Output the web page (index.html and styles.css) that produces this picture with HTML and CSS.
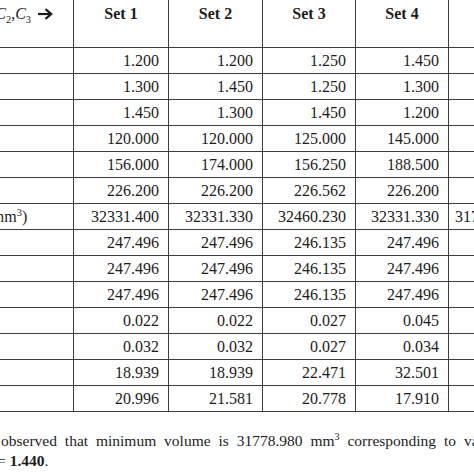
FILE: index.html
```html
<!DOCTYPE html>
<html>
<head>
<meta charset="utf-8">
<link rel="stylesheet" href="styles.css">
</head>
<body>
<div class="page">
  <table class="results">
    <colgroup>
      <col class="c-label"><col class="c1"><col class="c2"><col class="c3"><col class="c4"><col class="c5">
    </colgroup>
    <thead>
      <tr>
        <th class="lab-head"><i>C</i><sub>1</sub>, <i>C</i><sub>2</sub>,<i>C</i><sub>3</sub> <svg class="arrow" width="16" height="12" viewBox="0 0 16 12"><path d="M1 6 H14" stroke="#1c1c1c" stroke-width="2.2" fill="none"/><path d="M8.5 1.2 L14.2 6 L8.5 10.8" stroke="#1c1c1c" stroke-width="2.2" fill="none" stroke-linejoin="miter"/></svg></th>
        <th>Set 1</th><th>Set 2</th><th>Set 3</th><th>Set 4</th><th>Set 5</th>
      </tr>
    </thead>
    <tbody>
      <tr><td class="lab"><i>C</i><sub>1</sub></td><td>1.200</td><td>1.200</td><td>1.250</td><td>1.450</td><td class="last"></td></tr>
      <tr><td class="lab"><i>C</i><sub>2</sub></td><td>1.300</td><td>1.450</td><td>1.250</td><td>1.300</td><td class="last"></td></tr>
      <tr><td class="lab"><i>C</i><sub>3</sub></td><td>1.450</td><td>1.300</td><td>1.450</td><td>1.200</td><td class="last"></td></tr>
      <tr><td class="lab"><i>d</i><sub>1</sub></td><td>120.000</td><td>120.000</td><td>125.000</td><td>145.000</td><td class="last"></td></tr>
      <tr><td class="lab"><i>d</i><sub>2</sub></td><td>156.000</td><td>174.000</td><td>156.250</td><td>188.500</td><td class="last"></td></tr>
      <tr><td class="lab"><i>d</i><sub>3</sub></td><td>226.200</td><td>226.200</td><td>226.562</td><td>226.200</td><td class="last"></td></tr>
      <tr><td class="lab">Volume (mm<sup>3</sup>)</td><td>32331.400</td><td>32331.330</td><td>32460.230</td><td>32331.330</td><td class="last">31778.980</td></tr>
      <tr><td class="lab">&sigma;<sub>1</sub></td><td>247.496</td><td>247.496</td><td>246.135</td><td>247.496</td><td class="last"></td></tr>
      <tr><td class="lab">&sigma;<sub>2</sub></td><td>247.496</td><td>247.496</td><td>246.135</td><td>247.496</td><td class="last"></td></tr>
      <tr><td class="lab">&sigma;<sub>3</sub></td><td>247.496</td><td>247.496</td><td>246.135</td><td>247.496</td><td class="last"></td></tr>
      <tr><td class="lab">&delta;<sub>1</sub></td><td>0.022</td><td>0.022</td><td>0.027</td><td>0.045</td><td class="last"></td></tr>
      <tr><td class="lab">&delta;<sub>2</sub></td><td>0.032</td><td>0.032</td><td>0.027</td><td>0.034</td><td class="last"></td></tr>
      <tr><td class="lab">&theta;<sub>1</sub></td><td>18.939</td><td>18.939</td><td>22.471</td><td>32.501</td><td class="last"></td></tr>
      <tr><td class="lab">&theta;<sub>2</sub></td><td>20.996</td><td>21.581</td><td>20.778</td><td>17.910</td><td class="last"></td></tr>
    </tbody>
  </table>
  <div class="para">
    <div class="line1">observed that minimum volume is 31778.980 mm<sup>3</sup> corresponding to values of</div>
    <div class="line2">= <b>1.440</b>.</div>
  </div>
</div>
</body>
</html>
```
FILE: styles.css
```css
html, body {
  margin: 0;
  padding: 0;
  background: #fff;
  overflow: hidden;
}
body {
  width: 474px;
  height: 474px;
  font-family: "Liberation Serif", "Times New Roman", serif;
  color: #1c1c1c;
}
.page {
  margin-top: -21px;
  margin-left: -100px;
  width: 700px;
}
.results {
  border-collapse: collapse;
  table-layout: fixed;
  width: 648px;
  font-size: 16px;
}
.c-label { width: 173px; }
.c1 { width: 95px; }
.c2 { width: 94px; }
.c3 { width: 93px; }
.c4 { width: 93px; }
.c5 { width: 100px; }
.results th, .results td {
  border: 1px solid #3d3d3d;
  padding: 0 9px 0 0;
  white-space: nowrap;
  overflow: hidden;
}
.results thead tr { height: 68px; }
.results tbody tr { height: 26px; }
.results th {
  font-weight: bold;
  text-align: center;
  vertical-align: middle;
  padding: 0;
}
.results th.lab-head {
  font-weight: normal;
  text-align: right;
  padding-right: 20px;
}
.arrow {
  vertical-align: -1px;
  margin-left: 2px;
}
.results td {
  text-align: right;
  vertical-align: middle;
  line-height: 18px;
}
.results td.lab {
  text-align: left;
  padding-left: 32px;
}
.results td.last {
  text-align: left;
  padding-left: 6px;
}
sub, sup {
  font-size: 0.65em;
  line-height: 0;
}
.para {
  margin-top: 19px;
  margin-left: 101px;
  font-size: 15.5px;
  line-height: 20px;
  white-space: nowrap;
}
.line1 { word-spacing: 4px; }
.line2 { margin-left: -4px; }
```
